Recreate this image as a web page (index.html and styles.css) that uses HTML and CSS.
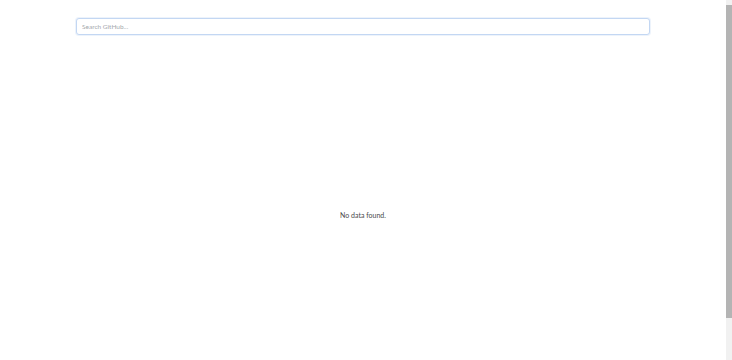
FILE: index.html
```html
<!DOCTYPE html>
<html lang="en">
<head>
    <meta charset="UTF-8">
    <link rel="stylesheet" href="styles.css">
</head>
<body>
    <div class="container">
        <div class="search-box">
            <input type="text" class="search-input" placeholder="Search GitHub..." autofocus>
        </div>
        <div class="results">
            <p class="empty">No data found.</p>
        </div>
    </div>

    <!-- barre de défilement -->
    <div class="scrollbar">
        <div class="scroll-arrow"></div>
        <div class="scroll-track">
            <div class="scroll-thumb"></div>
        </div>
        <div class="scroll-arrow"></div>
    </div>
</body>
</html>
```

FILE: styles.css
```css
:root {
    --text: #4a4a4a;
    --placeholder: #a4a8ad;
    --border-focus: #c3d7f3;
}

html, body {
    margin: 0;
    padding: 0;
    background: #ffffff;
    overflow: hidden;
}

body {
    font-family: 'Lato', 'Segoe UI', sans-serif;
    color: var(--text);
    height: 360px;
    padding-right: 6px;
    box-sizing: border-box;
}

.container {
    width: 574px;
    margin: 0 auto;
    padding-top: 18px;
}

.search-input {
    display: block;
    box-sizing: border-box;
    width: 100%;
    height: 17px;
    padding: 0 5px;
    border: 1px solid var(--border-focus);
    border-radius: 3px;
    font-family: inherit;
    font-size: 6.5px;
    color: var(--text);
    caret-color: #333333;
    outline: none;
    box-shadow: 0 0 0 1px rgba(195, 215, 243, 0.3);
}

.search-input::placeholder {
    color: var(--placeholder);
}

.results {
    display: flex;
    justify-content: center;
    padding-top: 176px;
}

.empty {
    margin: 0;
    font-size: 7px;
    color: var(--text);
}

.scrollbar {
    position: fixed;
    top: 0;
    right: 0;
    width: 6px;
    height: 360px;
    display: flex;
    flex-direction: column;
    background: #f1f1f1;
}

.scroll-arrow {
    height: 5px;
}

.scroll-track {
    flex: 1;
}

.scroll-thumb {
    height: 313px;
    background: #b4b4b4;
}
```
